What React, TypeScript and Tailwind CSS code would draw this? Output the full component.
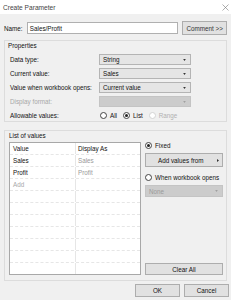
import React from 'react';

const Arrow = ({ muted = false }: { muted?: boolean }) => (
    <svg width="3" height="2" viewBox="0 0 4 3" className="shrink-0">
        <path d="M0 0h4L2 3z" fill={muted ? '#a0a0a0' : '#333'} />
    </svg>
);

const Combo = ({ value, disabled = false, className = '' }: { value?: string; disabled?: boolean; className?: string }) => (
    <div
        className={`flex items-center justify-between pl-[3px] pr-[4px] border ${
            disabled ? 'bg-[#cccccc] border-[#c4c4c4] text-[#9a9a9a]' : 'bg-[#e5e5e5] border-[#b4b4b4] text-[#111]'
        } ${className}`}
    >
        <span>{value}</span>
        <Arrow muted={disabled} />
    </div>
);

const Radio = ({ checked = false, disabled = false, label }: { checked?: boolean; disabled?: boolean; label: string }) => (
    <div className={`flex items-center gap-[3px] ${disabled ? 'text-[#b0b0b0]' : 'text-[#111]'}`}>
        <span
            className={`w-[7px] h-[7px] rounded-full border bg-white flex items-center justify-center ${
                disabled ? 'border-[#d4d4d4]' : 'border-[#444]'
            }`}
        >
            {checked && <span className="w-[3px] h-[3px] rounded-full bg-[#222]" />}
        </span>
        <span>{label}</span>
    </div>
);

const Button = ({ label, className = '' }: { label: string; className?: string }) => (
    <div className={`flex items-center justify-center bg-[#e1e1e1] border border-[#adadad] ${className}`}>
        {label}
    </div>
);

export default function App() {
    const props = [
        { label: 'Data type:', value: 'String' },
        { label: 'Current value:', value: 'Sales' },
        { label: 'Value when workbook opens:', value: 'Current value' },
    ];

    const rows = [
        { v: 'Value', d: 'Display As', header: true },
        { v: 'Sales', d: 'Sales' },
        { v: 'Profit', d: 'Profit' },
        { v: 'Add', d: '', add: true },
        { v: '', d: '' },
        { v: '', d: '' },
        { v: '', d: '' },
        { v: '', d: '' },
        { v: '', d: '' },
        { v: '', d: '' },
        { v: '', d: '' },
    ];

    return (
        <div
            className="w-[231px] h-[300px] bg-[#f0f0f0] flex flex-col text-[6.3px] leading-[7px] text-[#111] whitespace-nowrap overflow-hidden"
            style={{ fontFamily: '"Liberation Sans", Arial, sans-serif' }}
        >
            {/* Title bar */}
            <div className="h-[14px] bg-white flex items-center justify-between pl-[3px] pr-[2px] text-[#444] text-[6.6px]">
                <span>Create Parameter</span>
                <svg width="7" height="7" viewBox="0 0 7 7">
                    <path d="M0.5 0.5l6 6M6.5 0.5l-6 6" stroke="#777" strokeWidth="0.6" />
                </svg>
            </div>

            <div className="px-[4px] pt-[7px] flex flex-col">
                {/* Name row */}
                <div className="h-[14px] flex items-center">
                    <span className="w-[23px]">Name:</span>
                    <div className="w-[153px] h-[12px] bg-white border border-[#b0b0b0] flex items-center pl-[2px]">
                        Sales/Profit
                    </div>
                    <Button label="Comment >>" className="ml-[4px] w-[45px] h-[14px] text-[#333]" />
                </div>

                {/* Properties */}
                <div className="mt-[5px] h-[82px] border border-[#dcdcdc] flex flex-col pl-[3px]">
                    <span className="mt-[1px]">Properties</span>
                    <div className="mt-[5px] flex flex-col gap-[3px] pl-[2px]">
                        {props.map((p) => (
                            <div key={p.label} className="h-[11px] flex items-center">
                                <span className="w-[89px]">{p.label}</span>
                                <Combo value={p.value} className="w-[92px] h-[11px]" />
                            </div>
                        ))}
                        <div className="h-[11px] flex items-center">
                            <span className="w-[89px] text-[#a8a8a8]">Display format:</span>
                            <Combo disabled className="w-[92px] h-[11px]" />
                        </div>
                        <div className="h-[11px] flex items-center">
                            <span className="w-[89px]">Allowable values:</span>
                            <div className="flex items-center gap-[6px] ml-[1px]">
                                <Radio label="All" />
                                <Radio label="List" checked />
                                <Radio label="Range" disabled />
                            </div>
                        </div>
                    </div>
                </div>

                {/* List of values */}
                <div className="mt-[8px] h-[151px] border border-[#dcdcdc] flex flex-col pl-[4px] pr-[3px]">
                    <span className="mt-[1px]">List of values</span>
                    <div className="mt-[3px] flex gap-[4px]">
                        <div className="w-[132px] h-[133px] bg-white border border-[#a8a8a8] flex flex-col overflow-hidden">
                            {rows.map((r, i) => (
                                <div key={i} className="h-[12px] shrink-0 flex border-b border-dashed border-[#e6e6e6]">
                                    <div className="w-[66px] border-r border-[#e6e6e6] flex items-center pl-[3px]">
                                        <span className={r.add ? 'text-[#a8a8a8]' : ''}>{r.v}</span>
                                    </div>
                                    <div className="flex-1 flex items-center pl-[2px]">
                                        <span className={r.header ? '' : 'text-[#9a9a9a]'}>{r.d}</span>
                                    </div>
                                </div>
                            ))}
                        </div>

                        <div className="w-[78px] h-[133px] flex flex-col">
                            <div className="h-[8px] -mt-[1px] flex items-center">
                                <Radio label="Fixed" checked />
                            </div>
                            <div className="mt-[4px] h-[14px] bg-[#e1e1e1] border border-[#adadad] flex items-center justify-between pl-[12px] pr-[3px]">
                                <span>Add values from</span>
                                <svg width="2" height="3" viewBox="0 0 2 3">
                                    <path d="M0 0l2 1.5L0 3z" fill="#333" />
                                </svg>
                            </div>
                            <div className="mt-[6px] h-[8px] flex items-center">
                                <Radio label="When workbook opens" />
                            </div>
                            <Combo value="None" disabled className="mt-[4px] h-[12px]" />
                            <Button label="Clear All" className="mt-auto h-[12px]" />
                        </div>
                    </div>
                </div>

                {/* Footer */}
                <div className="mt-[3px] -mr-[2px] flex justify-end gap-[4px]">
                    <Button label="OK" className="w-[45px] h-[13px] border-[#0078d7]" />
                    <Button label="Cancel" className="w-[45px] h-[13px]" />
                </div>
            </div>
        </div>
    );
}
